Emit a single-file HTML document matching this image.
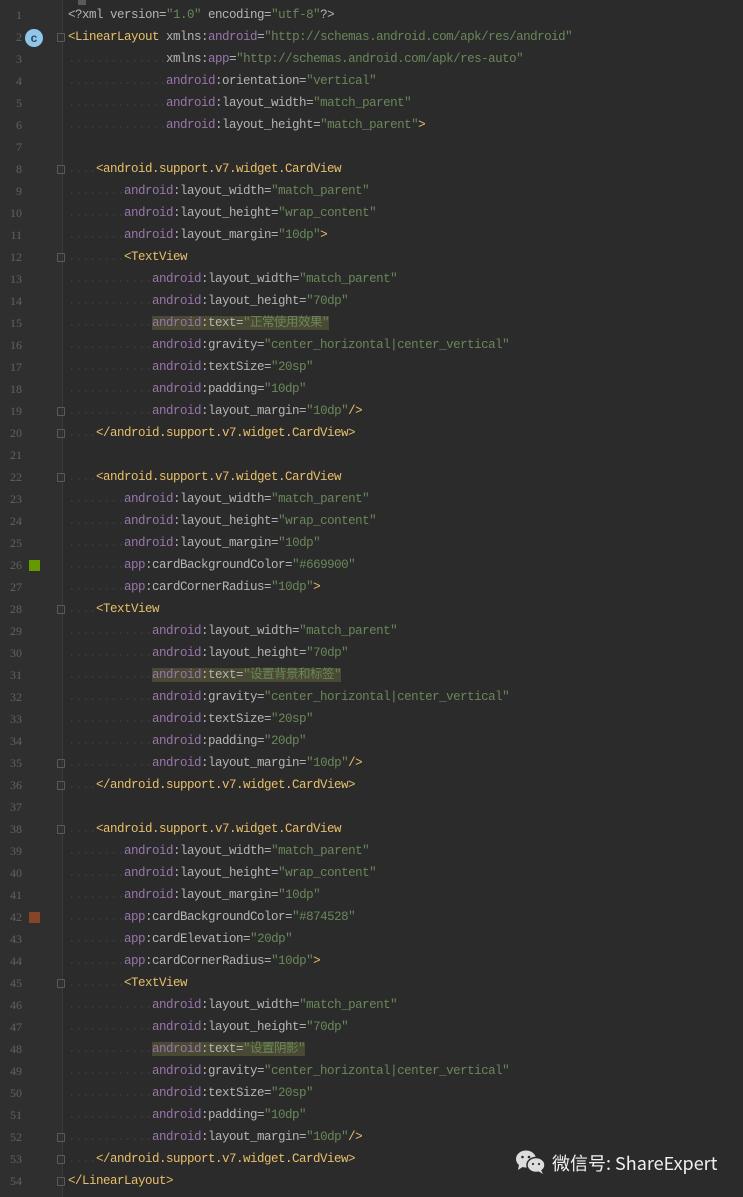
<!DOCTYPE html>
<html><head><meta charset="utf-8"><style>
html,body{margin:0;padding:0;background:#2b2b2b;width:743px;height:1197px;overflow:hidden;position:relative}
.g{position:absolute;left:0;top:0;width:62px;height:1197px;background:#2f2f2f}
.sep{position:absolute;left:62px;top:0;width:1px;height:1197px;background:#3a3a3a}
.ln{position:absolute;left:0;width:22px;text-align:right;font:12px "Liberation Serif",serif;color:#5f6265;line-height:22px}
.l{position:absolute;left:68px;white-space:pre;font-family:"Liberation Mono","Noto Sans CJK SC",monospace;font-size:12.5px;letter-spacing:-0.5px;line-height:22px;color:#b4b4b4}
.t{color:#e8bf6a}.n{color:#9876aa}.v{color:#6a8759}.d{color:#3a3a3a}.h{background:#494934}
.f{position:absolute;left:57px;width:8px;height:9px;border:1px solid #5a5a5a;box-sizing:border-box;border-radius:1px}
.wx{position:absolute;top:1150px;font:18px "Noto Sans CJK SC","Liberation Sans",sans-serif;color:#f0f0f0}
</style></head><body>
<div class="g"></div><div class="sep"></div>
<div style="position:absolute;left:78px;top:0;width:8px;height:5px;background:#5a5a5a"></div>
<div style="position:absolute;left:25px;top:29px;width:18px;height:18px;border-radius:50%;background:#8fc6ea;color:#2b4a60;font:bold 12px 'Liberation Sans',sans-serif;text-align:center;line-height:18px">c</div>
<div style="position:absolute;left:29px;top:560px;width:11px;height:11px;background:#669900"></div>
<div style="position:absolute;left:29px;top:912px;width:11px;height:11px;background:#874528"></div>

<div class="l" style="top:4px">&lt;?xml version=<span class="v">"1.0"</span> encoding=<span class="v">"utf-8"</span>?&gt;</div>
<div class="l" style="top:26px"><span class="t">&lt;LinearLayout</span> xmlns:<span class="n">android</span>=<span class="v">"http://schemas.android.com/apk/res/android"</span></div>
<div class="l" style="top:48px"><span class="d">..............</span>xmlns:<span class="n">app</span>=<span class="v">"http://schemas.android.com/apk/res-auto"</span></div>
<div class="l" style="top:70px"><span class="d">..............</span><span class="n">android</span>:orientation=<span class="v">"vertical"</span></div>
<div class="l" style="top:92px"><span class="d">..............</span><span class="n">android</span>:layout_width=<span class="v">"match_parent"</span></div>
<div class="l" style="top:114px"><span class="d">..............</span><span class="n">android</span>:layout_height=<span class="v">"match_parent"</span><span class="t">&gt;</span></div>

<div class="l" style="top:158px"><span class="d">....</span><span class="t">&lt;android.support.v7.widget.CardView</span></div>
<div class="l" style="top:180px"><span class="d">........</span><span class="n">android</span>:layout_width=<span class="v">"match_parent"</span></div>
<div class="l" style="top:202px"><span class="d">........</span><span class="n">android</span>:layout_height=<span class="v">"wrap_content"</span></div>
<div class="l" style="top:224px"><span class="d">........</span><span class="n">android</span>:layout_margin=<span class="v">"10dp"</span><span class="t">&gt;</span></div>
<div class="l" style="top:246px"><span class="d">........</span><span class="t">&lt;TextView</span></div>
<div class="l" style="top:268px"><span class="d">............</span><span class="n">android</span>:layout_width=<span class="v">"match_parent"</span></div>
<div class="l" style="top:290px"><span class="d">............</span><span class="n">android</span>:layout_height=<span class="v">"70dp"</span></div>
<div class="l" style="top:312px"><span class="d">............</span><span class="h"><span class="n">android</span>:text=<span class="v">"正常使用效果"</span></span></div>
<div class="l" style="top:334px"><span class="d">............</span><span class="n">android</span>:gravity=<span class="v">"center_horizontal|center_vertical"</span></div>
<div class="l" style="top:356px"><span class="d">............</span><span class="n">android</span>:textSize=<span class="v">"20sp"</span></div>
<div class="l" style="top:378px"><span class="d">............</span><span class="n">android</span>:padding=<span class="v">"10dp"</span></div>
<div class="l" style="top:400px"><span class="d">............</span><span class="n">android</span>:layout_margin=<span class="v">"10dp"</span><span class="t">/&gt;</span></div>
<div class="l" style="top:422px"><span class="d">....</span><span class="t">&lt;/android.support.v7.widget.CardView&gt;</span></div>

<div class="l" style="top:466px"><span class="d">....</span><span class="t">&lt;android.support.v7.widget.CardView</span></div>
<div class="l" style="top:488px"><span class="d">........</span><span class="n">android</span>:layout_width=<span class="v">"match_parent"</span></div>
<div class="l" style="top:510px"><span class="d">........</span><span class="n">android</span>:layout_height=<span class="v">"wrap_content"</span></div>
<div class="l" style="top:532px"><span class="d">........</span><span class="n">android</span>:layout_margin=<span class="v">"10dp"</span></div>
<div class="l" style="top:554px"><span class="d">........</span><span class="n">app</span>:cardBackgroundColor=<span class="v">"#669900"</span></div>
<div class="l" style="top:576px"><span class="d">........</span><span class="n">app</span>:cardCornerRadius=<span class="v">"10dp"</span><span class="t">&gt;</span></div>
<div class="l" style="top:598px"><span class="d">....</span><span class="t">&lt;TextView</span></div>
<div class="l" style="top:620px"><span class="d">............</span><span class="n">android</span>:layout_width=<span class="v">"match_parent"</span></div>
<div class="l" style="top:642px"><span class="d">............</span><span class="n">android</span>:layout_height=<span class="v">"70dp"</span></div>
<div class="l" style="top:664px"><span class="d">............</span><span class="h"><span class="n">android</span>:text=<span class="v">"设置背景和标签"</span></span></div>
<div class="l" style="top:686px"><span class="d">............</span><span class="n">android</span>:gravity=<span class="v">"center_horizontal|center_vertical"</span></div>
<div class="l" style="top:708px"><span class="d">............</span><span class="n">android</span>:textSize=<span class="v">"20sp"</span></div>
<div class="l" style="top:730px"><span class="d">............</span><span class="n">android</span>:padding=<span class="v">"20dp"</span></div>
<div class="l" style="top:752px"><span class="d">............</span><span class="n">android</span>:layout_margin=<span class="v">"10dp"</span><span class="t">/&gt;</span></div>
<div class="l" style="top:774px"><span class="d">....</span><span class="t">&lt;/android.support.v7.widget.CardView&gt;</span></div>

<div class="l" style="top:818px"><span class="d">....</span><span class="t">&lt;android.support.v7.widget.CardView</span></div>
<div class="l" style="top:840px"><span class="d">........</span><span class="n">android</span>:layout_width=<span class="v">"match_parent"</span></div>
<div class="l" style="top:862px"><span class="d">........</span><span class="n">android</span>:layout_height=<span class="v">"wrap_content"</span></div>
<div class="l" style="top:884px"><span class="d">........</span><span class="n">android</span>:layout_margin=<span class="v">"10dp"</span></div>
<div class="l" style="top:906px"><span class="d">........</span><span class="n">app</span>:cardBackgroundColor=<span class="v">"#874528"</span></div>
<div class="l" style="top:928px"><span class="d">........</span><span class="n">app</span>:cardElevation=<span class="v">"20dp"</span></div>
<div class="l" style="top:950px"><span class="d">........</span><span class="n">app</span>:cardCornerRadius=<span class="v">"10dp"</span><span class="t">&gt;</span></div>
<div class="l" style="top:972px"><span class="d">........</span><span class="t">&lt;TextView</span></div>
<div class="l" style="top:994px"><span class="d">............</span><span class="n">android</span>:layout_width=<span class="v">"match_parent"</span></div>
<div class="l" style="top:1016px"><span class="d">............</span><span class="n">android</span>:layout_height=<span class="v">"70dp"</span></div>
<div class="l" style="top:1038px"><span class="d">............</span><span class="h"><span class="n">android</span>:text=<span class="v">"设置阴影"</span></span></div>
<div class="l" style="top:1060px"><span class="d">............</span><span class="n">android</span>:gravity=<span class="v">"center_horizontal|center_vertical"</span></div>
<div class="l" style="top:1082px"><span class="d">............</span><span class="n">android</span>:textSize=<span class="v">"20sp"</span></div>
<div class="l" style="top:1104px"><span class="d">............</span><span class="n">android</span>:padding=<span class="v">"10dp"</span></div>
<div class="l" style="top:1126px"><span class="d">............</span><span class="n">android</span>:layout_margin=<span class="v">"10dp"</span><span class="t">/&gt;</span></div>
<div class="l" style="top:1148px"><span class="d">....</span><span class="t">&lt;/android.support.v7.widget.CardView&gt;</span></div>
<div class="l" style="top:1170px"><span class="t">&lt;/LinearLayout&gt;</span></div>

<div class="f" style="top:33px"></div><div class="f" style="top:165px"></div><div class="f" style="top:253px"></div>
<div class="f" style="top:407px"></div><div class="f" style="top:429px"></div><div class="f" style="top:473px"></div>
<div class="f" style="top:605px"></div><div class="f" style="top:759px"></div><div class="f" style="top:781px"></div>
<div class="f" style="top:825px"></div><div class="f" style="top:979px"></div><div class="f" style="top:1133px"></div>
<div class="f" style="top:1155px"></div><div class="f" style="top:1177px"></div>

<div id="nums"></div>
<script>
var s='';for(var i=1;i<=54;i++){s+='<div class="ln" style="top:'+(4+22*(i-1))+'px">'+i+'</div>';}
document.getElementById('nums').innerHTML=s;
</script>

<svg style="position:absolute;left:514px;top:1148px" width="34" height="28" viewBox="0 0 34 28">
<ellipse cx="12" cy="11" rx="10" ry="8.5" fill="#ddd"/>
<path d="M5 17 L4 22 L10 18 Z" fill="#ddd"/>
<ellipse cx="22" cy="17" rx="9" ry="7.5" fill="#ddd" stroke="#2b2b2b" stroke-width="1.5"/>
<path d="M27 22 L29 26 L24 23 Z" fill="#ddd"/>
<circle cx="8.5" cy="9" r="1.3" fill="#2b2b2b"/><circle cx="15" cy="9" r="1.3" fill="#2b2b2b"/>
<circle cx="19" cy="16" r="1.1" fill="#2b2b2b"/><circle cx="25" cy="16" r="1.1" fill="#2b2b2b"/>
</svg>
<div class="wx" style="left:552px">微信号: ShareExpert</div>
</body></html>
